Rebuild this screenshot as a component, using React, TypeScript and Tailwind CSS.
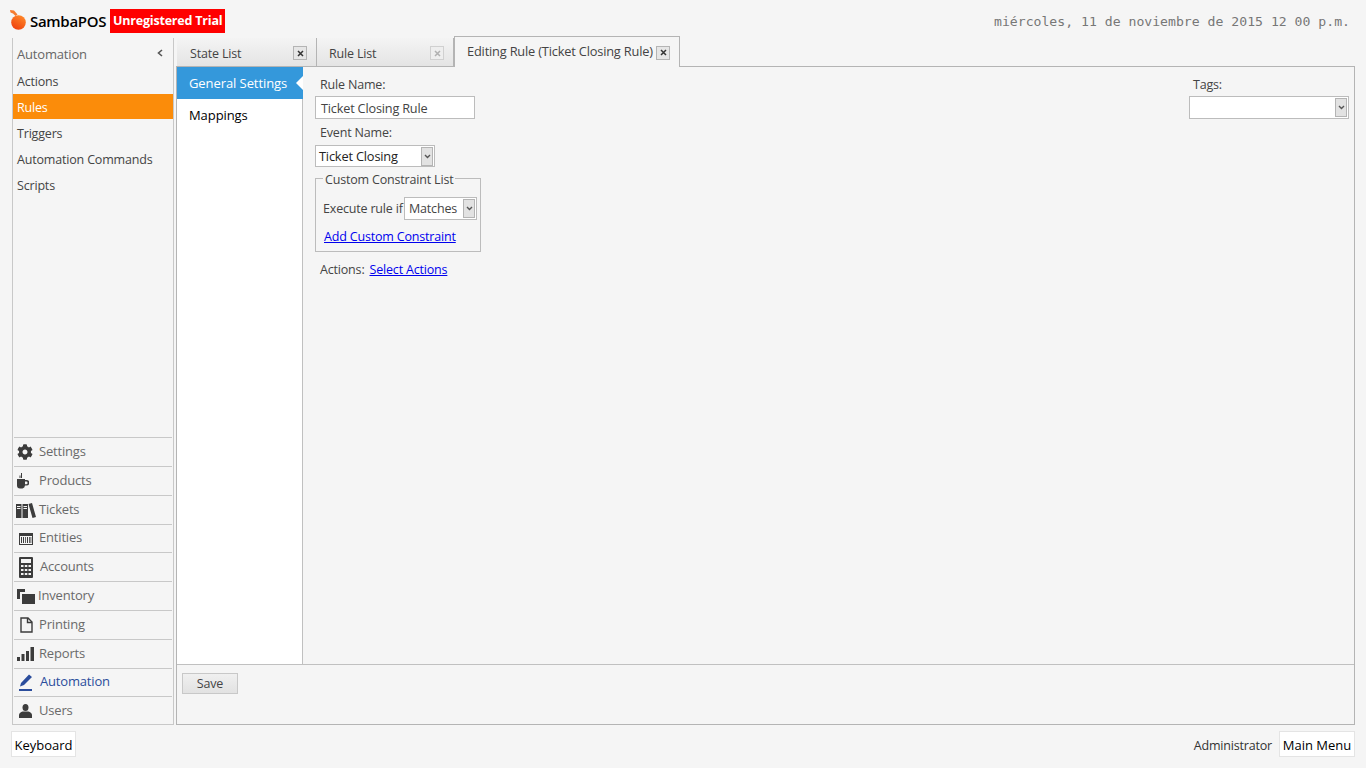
import React from "react";
import { FaCog } from "react-icons/fa";

const font = "font-['Open_Sans',sans-serif]";
const t = "text-[12.5px] tracking-[-0.18px]";
const t13 = "text-[13px] tracking-[-0.18px]";

const ic = "fill-[#3c3c3c]";
const Cup = () => (
  <svg width="12" height="16" viewBox="0 0 12 16" className={ic}>
    <path d="M0 6h8v1h1.500a2.500 2.500 0 0 1 0 5.500H8A3.500 3.500 0 0 1 5.500 15.500H3A3 3 0 0 1 0 12.500zM8 8.500v2.800h1.200a1.400 1.400 0 0 0 0-2.800z" />
    <path d="M4 0h1v5H4zM2.500 2.500h1V5h-1z" />
  </svg>
);
const Books = () => (
  <svg width="20" height="15" viewBox="0 0 20 15" className={ic}>
    <path d="M0 1h5.500v14H0zM6.500 1H12v14H6.500zM12.500 1l3.500-1 4 14-3.500 1z" />
    <path fill="#f5f5f5" d="M1 3h3.500v1H1zM1 5h3.500v1H1zM7.500 3H11v1H7.500zM7.500 5H11v1H7.500z" />
  </svg>
);
const Barcode = () => (
  <svg width="14" height="12" viewBox="0 0 14 12">
    <rect width="14" height="12" fill="#3c3c3c" />
    <rect x="1" y="3" width="12" height="8" fill="#f5f5f5" />
    <path d="M2 4h1v6H2zM4 4h1v6H4zM6 4h.800v6H6zM8 4h1v6H8zM10 4h.800v6H10zM11.500 4h.800v6h-.800z" fill="#3c3c3c" />
  </svg>
);
const Calc = () => (
  <svg width="14" height="21" viewBox="0 0 14 21">
    <rect width="14" height="21" rx="1" fill="#3c3c3c" />
    <rect x="2" y="2" width="10" height="4" fill="#f5f5f5" />
    <path fill="#f5f5f5" d="M2 8h2.500v2H2zM5.800 8h2.500v2H5.800zM9.500 8H12v2H9.500zM2 12h2.500v2H2zM5.800 12h2.500v2H5.800zM9.500 12H12v2H9.500zM2 16h2.500v2H2zM5.800 16h2.500v2H5.800zM9.500 16H12v2H9.500z" />
  </svg>
);
const Layers = () => (
  <svg width="18" height="15" viewBox="0 0 18 15" className={ic}>
    <path d="M0 0h8v3H3v7H0z" />
    <rect x="5" y="5" width="13" height="10" />
  </svg>
);
const Doc = () => (
  <svg width="13" height="16" viewBox="0 0 13 16" fill="none" stroke="#3c3c3c" strokeWidth="1.400">
    <path d="M1 1h7l4 4v10H1zM7.500 1v4.500H12" />
  </svg>
);
const Bars = () => (
  <svg width="17" height="14" viewBox="0 0 17 14" className={ic}>
    <path d="M0 10h3v4H0zM4.500 7h3v7h-3zM9 4h3v10H9zM13.500 0h3.500v14h-3.500z" />
  </svg>
);
const Pen = () => (
  <svg width="13" height="17" viewBox="0 0 13 17" fill="#2b4d9c">
    <path d="M0 15h13v2H0zM1 12.500l1-3.500L10 .500l3 2.500-8 8z" />
  </svg>
);
const User = () => (
  <svg width="13" height="14" viewBox="0 0 13 14" className={ic}>
    <ellipse cx="6.500" cy="3.500" rx="3" ry="3.500" />
    <path d="M0 14v-3c0-2 2-3 3.500-3.500h6C11 8 13 9 13 11v3z" />
  </svg>
);
const Apple = () => (
  <svg width="17" height="20" viewBox="0 0 17 20" className="-mt-[2px]">
    <defs>
      <linearGradient id="appleFill" x1="0.800" y1="0" x2="0.200" y2="1">
        <stop offset="0" stopColor="#ff8a2a" />
        <stop offset="1" stopColor="#ee3d0c" />
      </linearGradient>
    </defs>
    <circle cx="8.500" cy="12.500" r="7.300" fill="url(#appleFill)" />
    <path d="M0 0l4 .500 3.500 4-2 1.500L3 3.500 0.500 2.500z" fill="#f57b2e" />
  </svg>
);

const Chevron = () => (
  <svg width="7" height="5" viewBox="0 0 7 5" fill="none" stroke="#555" strokeWidth="1.400">
    <path d="M1 1l2.500 2.500L6 1" />
  </svg>
);

const SelectArrow = ({ h }: { h: string }) => (
  <span className={`w-[12px] ${h} my-auto mr-px bg-[#e2e2e2] border border-[#b4b4b4] flex items-center justify-center shrink-0`}>
    <Chevron />
  </span>
);

const CloseBtn = ({ faded, cls }: { faded?: boolean; cls?: string }) => (
  <span className={`w-[14px] h-[14px] border flex items-center justify-center shrink-0 ${faded ? "border-[#d0d0d0] bg-[#eeeeee]" : "border-[#b4b4b4] bg-[#e6e6e6]"} ${cls ?? ""}`}>
    <svg width="7" height="7" viewBox="0 0 7 7" stroke={faded ? "#b0b0b0" : "#333"} strokeWidth="1.500">
      <path d="M1 1l5 5M6 1L1 6" />
    </svg>
  </span>
);

const NavItem = ({ label, active }: { label: string; active?: boolean }) => (
  <div className={`flex items-center pl-1 pt-[3px] ${t} ${active ? "bg-[#fb8c0a] text-white h-[25px] mb-px" : "h-[26px] text-[#444444]"}`}>{label}</div>
);

const Acc = ({ icon, label, h, blue, gap, cls }: { icon: React.ReactNode; label: string; h: string; blue?: boolean; gap: string; cls?: string }) => (
  <div className={`${h} border-t border-[#c8c8c8] mx-px flex items-center ${t13} ${blue ? "text-[#2b4d9c]" : "text-[#6a6a6a]"}`}>
    <span className={`${gap} flex justify-center shrink-0`}>{icon}</span>
    <span className={cls}>{label}</span>
  </div>
);

const Tab = ({ label, faded, w, pl }: { label: string; faded?: boolean; w: string; pl: string }) => (
  <div className={`${w} ${pl} h-[28px] bg-gradient-to-b from-[#f4f4f4] to-[#e4e4e4] border-r border-[#b4b4b4] flex items-center justify-between pr-[9px] pt-[4px] ${t} text-[#444444]`}>
    <span>{label}</span>
    <CloseBtn faded={faded} cls="-mt-[2px]" />
  </div>
);

export default function App() {
  return (
    <div className={`${font} w-[1366px] h-[768px] bg-[#f5f5f5] flex flex-col overflow-hidden`}>
      <header className="h-[38px] flex items-center pl-[10px] pr-[16px] pt-[4px] shrink-0">
        <Apple />
        <span className="ml-[3px] text-[15px] font-semibold text-black tracking-[-0.3px]">SambaPOS</span>
        <span className="ml-[4px] h-[24px] w-[115px] bg-[#ff0000] text-white text-[12.5px] tracking-[-0.2px] font-bold flex items-center justify-center whitespace-nowrap">Unregistered Trial</span>
        <span className="ml-auto pt-[2px] font-['DejaVu_Sans_Mono',monospace] text-[13.15px] text-[#777777] whitespace-pre">miércoles, 11 de noviembre de 2015 12 00 p.m.</span>
      </header>

      <div className="flex flex-1 min-h-0 pl-[12px] pr-[11px]">
        <aside className="w-[162px] h-[687px] border-x border-b border-[#c8c8c8] flex flex-col shrink-0">
          <div className={`h-[30px] flex items-center justify-between pl-[4px] pr-[10px] pt-[4px] ${t13} text-[#666666]`}>
            <span>Automation</span>
            <svg width="6" height="8" viewBox="0 0 6 8" fill="none" stroke="#555" strokeWidth="1.600" className="mb-[4px]"><path d="M5 1L1.500 4 5 7" /></svg>
          </div>
          <NavItem label="Actions" />
          <NavItem label="Rules" active />
          <NavItem label="Triggers" />
          <NavItem label="Automation Commands" />
          <NavItem label="Scripts" />
          <div className="mt-auto">
            <Acc h="h-[29px]" gap="w-[25px] pr-[3px]" icon={<FaCog size={16} color="#3c3c3c" />} label="Settings" />
            <Acc h="h-[29px]" gap="w-[25px] pr-[7px]" icon={<Cup />} label="Products" />
            <Acc h="h-[29px]" gap="w-[25px] pr-[2px]" icon={<Books />} label="Tickets" />
            <Acc h="h-[28px]" gap="w-[25px] pr-[1px]" icon={<Barcode />} label="Entities" cls="pb-[2px]" />
            <Acc h="h-[29px]" gap="w-[26px] pr-[2px]" icon={<Calc />} label="Accounts" />
            <Acc h="h-[29px]" gap="w-[24px] pr-[1px]" icon={<Layers />} label="Inventory" />
            <Acc h="h-[29px]" gap="w-[25px] pr-[1px]" icon={<Doc />} label="Printing" />
            <Acc h="h-[29px]" gap="w-[25px] pr-[3px]" icon={<Bars />} label="Reports" />
            <Acc h="h-[28px]" gap="w-[26px] pr-[3px]" icon={<Pen />} label="Automation" blue cls="pb-[2px]" />
            <Acc h="h-[28px]" gap="w-[25px] pr-[2px]" icon={<User />} label="Users" />
          </div>
        </aside>

        <main className="ml-[2px] flex-1 min-w-0 flex flex-col h-[687px]">
          <div className="h-[28px] flex items-end shrink-0 relative">
            <div className="ml-px flex">
              <Tab label="State List" w="w-[140px]" pl="pl-[13px]" />
              <Tab label="Rule List" faded w="w-[137px]" pl="pl-[12px]" />
            </div>
            <div className={`absolute left-[278px] top-[-2px] w-[226px] h-[31px] bg-[#f5f5f5] border border-b-0 border-[#b4b4b4] flex items-center justify-between pl-[12px] pr-[9px] text-[12.8px] tracking-[-0.18px] text-[#444444] z-10 whitespace-nowrap`}>
              <span>Editing Rule (Ticket Closing Rule)</span>
              <CloseBtn cls="mt-[1px]" />
            </div>
          </div>
          <div className="flex-1 min-h-0 border border-[#b4b4b4] flex flex-col">
            <div className="flex flex-1 min-h-0">
              <nav className="w-[126px] bg-white border-r border-[#c0c0c0] shrink-0 text-[13px] tracking-[-0.08px]">
                <div className="h-[32px] w-[126px] bg-[#3498db] text-white font-medium flex items-center pl-[12px] pt-[2px] relative whitespace-nowrap">
                  General Settings
                  <span className="absolute right-0 top-[9px] w-0 h-0 border-y-[7px] border-y-transparent border-r-[7px] border-r-white" />
                </div>
                <div className="h-[32px] text-black flex items-center pl-[12px] pt-[2px]">Mappings</div>
              </nav>
              <section className={`flex-1 flex justify-between pl-[12px] pr-[5px] pt-[8px] ${t} text-[#444444]`}>
                <div className="flex flex-col items-start">
                  <label className="pl-[5px] h-[20px] flex items-center">Rule Name:</label>
                  <div className="mt-[1px] w-[160px] h-[23px] bg-white border border-[#bcbcbc] pl-[5px] pt-[2px] flex items-center text-[12.7px]">Ticket Closing Rule</div>
                  <label className="pl-[5px] mt-[4px] h-[20px] flex items-center">Event Name:</label>
                  <div className="mt-[2px] w-[120px] h-[22px] bg-white border border-[#bcbcbc] pl-[3px] flex items-center justify-between text-[#222222] text-[12.8px]">
                    <span className="pt-[2px]">Ticket Closing</span>
                    <SelectArrow h="h-[19px]" />
                  </div>
                  <fieldset className="mt-[6px] w-[166px] min-w-0 h-[79px] border border-[#bcbcbc] pl-[7px] pr-[3px]">
                    <legend className="ml-0 px-[2px] leading-[10px] h-[10px] relative top-[2px]">Custom Constraint List</legend>
                    <div className="mt-[14px] flex items-center h-[23px]">
                      <span className="whitespace-nowrap pt-[2px]">Execute rule if</span>
                      <div className="ml-auto w-[73px] h-[23px] bg-white border border-[#bcbcbc] pl-[4px] flex items-center justify-between">
                        <span className="pt-[2px]">Matches</span>
                        <SelectArrow h="h-[19px]" />
                      </div>
                    </div>
                    <a href="#" className="block mt-[8px] ml-px text-[#0000ee] underline leading-[18px] whitespace-nowrap">Add Custom Constraint</a>
                  </fieldset>
                  <div className="mt-[9px] pl-[5px] h-[18px] flex items-center whitespace-nowrap">
                    <span>Actions:</span>
                    <a href="#" className="ml-[5px] text-[#0000ee] underline">Select Actions</a>
                  </div>
                </div>
                <div className="flex flex-col w-[160px]">
                  <label className="pl-[4px] h-[20px] flex items-center">Tags:</label>
                  <div className="mt-[1px] h-[23px] bg-white border border-[#bcbcbc] flex justify-end">
                    <SelectArrow h="h-[19px]" />
                  </div>
                </div>
              </section>
            </div>
            <footer className="h-[60px] border-t border-[#c0c0c0] pl-[5px] pt-[8px] shrink-0">
              <button className={`w-[56px] h-[21px] bg-gradient-to-b from-[#f0f0f0] to-[#e2e2e2] border border-[#c8c8c8] ${t} pt-[2px] text-[#444444] flex items-center justify-center`}>Save</button>
            </footer>
          </div>
        </main>
      </div>

      <div className="h-[43px] shrink-0 flex items-start justify-between pl-[11px] pr-[11px] pt-[6px] text-[13px] text-black">
        <div className="w-[65px] h-[26px] bg-white border border-[#e4e4e4] pt-[3px] flex items-center justify-center">Keyboard</div>
        <div className="flex items-center">
          <span className={`text-[#333333] mr-[7px] pt-[5px] ${t}`}>Administrator</span>
          <div className="w-[76px] h-[26px] bg-white border border-[#e4e4e4] pt-[3px] flex items-center justify-center whitespace-nowrap">Main Menu</div>
        </div>
      </div>
    </div>
  );
}
